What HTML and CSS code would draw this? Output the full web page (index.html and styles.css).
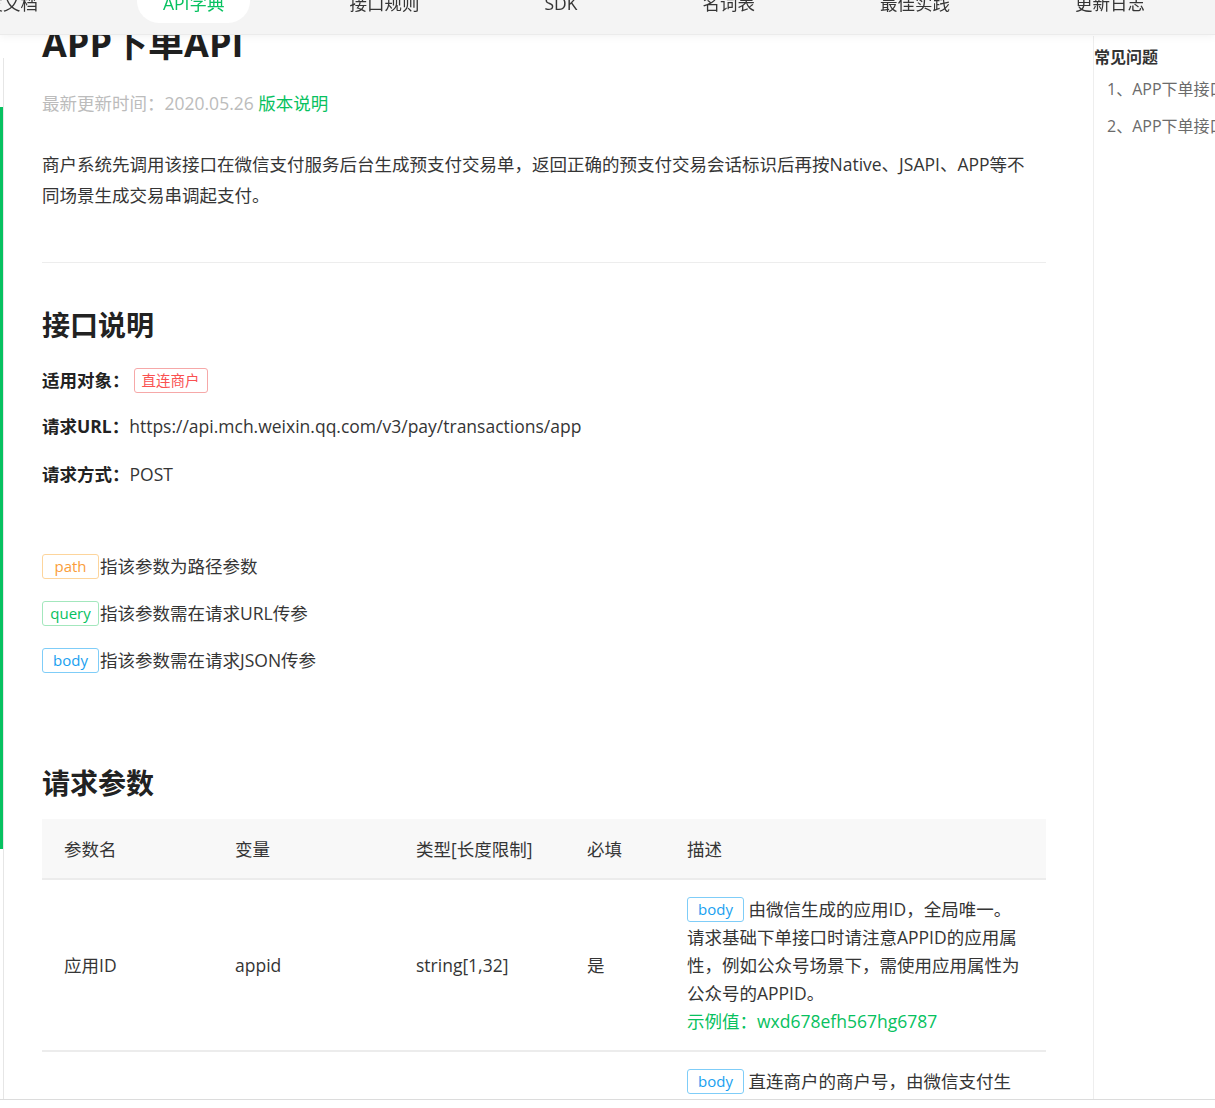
FILE: index.html
```html
<!DOCTYPE html>
<html lang="zh-CN">
<head>
<meta charset="utf-8">
<title>APP下单API</title>
<link rel="stylesheet" href="styles.css">
</head>
<body>
<header class="topnav">
  <nav class="nav-list">
    <a class="nav-item">开发文档</a>
    <a class="nav-item is-active">API字典</a>
    <a class="nav-item">接口规则</a>
    <a class="nav-item">SDK</a>
    <a class="nav-item">名词表</a>
    <a class="nav-item">最佳实践</a>
    <a class="nav-item">更新日志</a>
  </nav>
</header>

<div class="page">
  <aside class="left-rail"><div class="rail-active"></div></aside>

  <main class="content">
    <h1 class="doc-title">APP下单API</h1>
    <p class="doc-meta">最新更新时间：2020.05.26 <a class="meta-link">版本说明</a></p>
    <p class="doc-intro">商户系统先调用该接口在微信支付服务后台生成预支付交易单，返回正确的预支付交易会话标识后再按Native、JSAPI、APP等不<br>同场景生成交易串调起支付。</p>
    <hr class="divider">

    <h2 class="section-title">接口说明</h2>
    <div class="info-row"><span class="info-label">适用对象：</span><span class="tag tag-red">直连商户</span></div>
    <div class="info-row info-url"><span class="info-label">请求URL：</span>https://api.mch.weixin.qq.com/v3/pay/transactions/app</div>
    <div class="info-row info-method"><span class="info-label">请求方式：</span>POST</div>

    <div class="legend legend-first"><span class="ptag ptag-path">path</span><span class="legend-text">指该参数为路径参数</span></div>
    <div class="legend"><span class="ptag ptag-query">query</span><span class="legend-text">指该参数需在请求URL传参</span></div>
    <div class="legend"><span class="ptag ptag-body">body</span><span class="legend-text">指该参数需在请求JSON传参</span></div>

    <h2 class="section-title section-params">请求参数</h2>
    <table class="param-table">
      <colgroup>
        <col class="c-name"><col class="c-var"><col class="c-type"><col class="c-req"><col class="c-desc">
      </colgroup>
      <thead>
        <tr><th>参数名</th><th>变量</th><th>类型[长度限制]</th><th>必填</th><th>描述</th></tr>
      </thead>
      <tbody>
        <tr>
          <td>应用ID</td>
          <td>appid</td>
          <td>string[1,32]</td>
          <td>是</td>
          <td class="desc"><span class="ptag ptag-body">body</span> 由微信生成的应用ID，全局唯一。<br>请求基础下单接口时请注意APPID的应用属<br>性，例如公众号场景下，需使用应用属性为<br>公众号的APPID。<br><span class="example">示例值：wxd678efh567hg6787</span></td>
        </tr>
        <tr>
          <td>直连商户号</td>
          <td>mchid</td>
          <td>string[1,32]</td>
          <td>是</td>
          <td class="desc"><span class="ptag ptag-body">body</span> 直连商户的商户号，由微信支付生<br>成并下发。<br><span class="example">示例值：1230000109</span></td>
        </tr>
      </tbody>
    </table>
  </main>

  <aside class="toc">
    <div class="toc-title">常见问题</div>
    <div class="toc-item toc-first">1、APP下单接口调用后如何调起支付？</div>
    <div class="toc-item">2、APP下单接口返回的prepay_id有效期是多久？</div>
  </aside>
</div>

<div class="bottom-edge"></div>
</body>
</html>
```

FILE: styles.css
```css
* { box-sizing: border-box; }

html, body {
  margin: 0;
  padding: 0;
  height: 1108px;
  overflow: hidden;
  background: #fff;
}

body {
  font-family: "Open Sans", "Noto Sans CJK SC", sans-serif;
  font-size: 17.5px;
  color: #353535;
}

/* ---------- top navigation (fixed, page is scrolled under it) ---------- */
.topnav {
  position: fixed;
  top: 0;
  left: 0;
  right: 0;
  height: 35px;
  background: #f4f4f4;
  border-bottom: 1px solid #ebebeb;
  box-shadow: 0 2px 8px rgba(0, 0, 0, 0.05);
  z-index: 10;
  overflow: hidden;
}

.nav-list {
  display: flex;
  gap: 73px;
  margin-left: -58px;
}

.nav-item {
  display: block;
  height: 23px;
  padding: 0 26px;
  font-size: 17.5px;
  line-height: 6px;
  color: #353535;
  white-space: nowrap;
}

.nav-item.is-active {
  background: #fff;
  color: #07c160;
  border-radius: 0 0 22px 22px;
}

/* ---------- page columns ---------- */
.page {
  display: flex;
  height: 1108px;
}

.left-rail {
  flex: 0 0 4px;
  margin-top: 58px;
  border-right: 1px solid #e6e6e6;
}

.rail-active {
  width: 3px;
  height: 742px;
  margin-top: 49px;
  background: #07c160;
}

.content {
  flex: 0 0 1004px;
  margin-left: 38px;
  padding-top: 20px;
}

.toc {
  flex: 1 1 auto;
  margin-left: 47px;
  margin-top: 36px;
  border-left: 1px solid #eeeeee;
  white-space: nowrap;
  overflow: hidden;
  min-width: 0;
}

.toc-title {
  margin-top: 9px;
  font-size: 16px;
  font-weight: 700;
  line-height: 24px;
  color: #333;
}

.toc-item {
  padding-left: 13px;
  margin-top: 13px;
  font-size: 16px;
  line-height: 24px;
  color: #6b6b6b;
}

.toc-first { margin-top: 8px; }

/* ---------- document ---------- */
.doc-title {
  margin: 0;
  font-size: 36px;
  line-height: 48px;
  font-weight: 700;
  color: #1f1f1f;
}

.doc-meta {
  margin: 23px 0 0;
  line-height: 24px;
  color: #bcbcbc;
}

.meta-link { color: #07c160; }

.doc-intro {
  margin: 34px 0 0;
  line-height: 31px;
  color: #353535;
}

.divider {
  margin: 51px 0 0;
  border: 0;
  border-top: 1px solid #ededed;
}

.section-title {
  margin: 42px 0 0;
  font-size: 28px;
  line-height: 40px;
  font-weight: 700;
  color: #222;
}

.info-row {
  margin-top: 20px;
  display: flex;
  align-items: center;
  line-height: 30px;
  height: 30px;
}

.info-url { margin-top: 16px; }
.info-method { margin-top: 18px; }

.info-label {
  font-weight: 700;
  color: #222;
}

.tag {
  display: inline-block;
  margin-left: 4px;
  padding: 0 7px;
  height: 25px;
  line-height: 23px;
  font-size: 14.5px;
  border-radius: 3px;
}

.tag-red {
  color: #fa5151;
  border: 1px solid #f6a8a8;
}

.legend {
  display: flex;
  align-items: center;
  height: 30px;
  line-height: 30px;
  margin-top: 17px;
}

.legend-first { margin-top: 62px; }

.legend-text { margin-left: 1px; }

.ptag {
  display: inline-block;
  width: 57px;
  height: 25px;
  line-height: 23px;
  font-size: 15px;
  text-align: center;
  border-radius: 3px;
  vertical-align: 1px;
}

.ptag-path { color: #fa9d3b; border: 1px solid #fdd59c; }
.ptag-query { color: #07c160; border: 1px solid #a3e7bd; }
.ptag-body { color: #1a9ff0; border: 1px solid #7fcdf8; }

.section-params { margin-top: 88px; }

/* ---------- parameter table ---------- */
.param-table {
  margin-top: 16px;
  width: 1004px;
  border-collapse: collapse;
  table-layout: fixed;
}

.c-name { width: 171px; }
.c-var { width: 181px; }
.c-type { width: 171px; }
.c-req { width: 100px; }
.c-desc { width: 381px; }

.param-table th {
  height: 60px;
  padding: 0 0 0 22px;
  background: #f8f8f8;
  border-bottom: 2px solid #ececec;
  font-weight: 400;
  text-align: left;
  color: #353535;
}

.param-table td {
  padding: 15px 4px 15px 22px;
  line-height: 28px;
  vertical-align: middle;
  border-bottom: 2px solid #ececec;
  white-space: nowrap;
}

.example { color: #07c160; }

/* ---------- bottom edge of the viewport ---------- */
.bottom-edge {
  position: fixed;
  left: 0;
  right: 0;
  bottom: 0;
  height: 9px;
  background: #fff;
  border-top: 1px solid #dcdcdc;
  z-index: 10;
}
```
